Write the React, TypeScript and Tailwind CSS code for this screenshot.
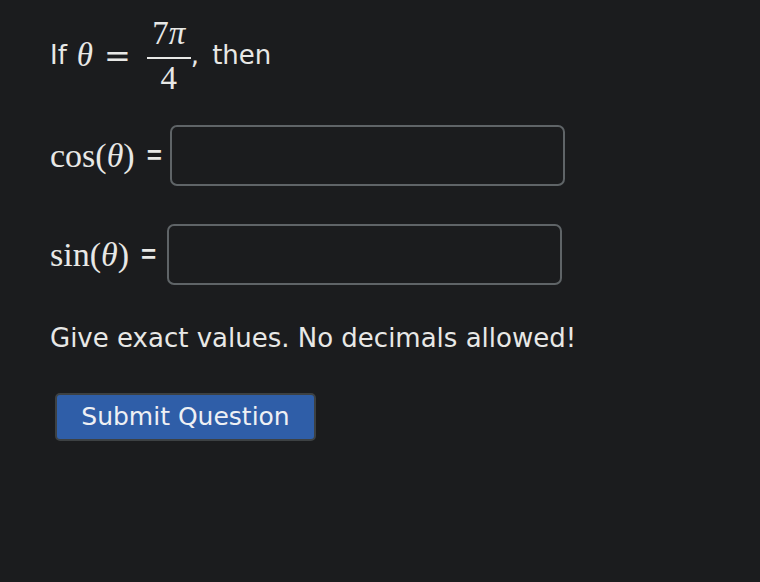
import React from "react";

const sans = { fontFamily: '"DejaVu Sans", sans-serif' };
const lsans = { fontFamily: '"Liberation Sans", Arial, sans-serif' };
const serif = { fontFamily: '"Liberation Serif", "Times New Roman", serif' };
const dserif = { fontFamily: '"DejaVu Serif", serif' };

export default function App() {
  return (
    <div
      className="min-h-[582px] w-full bg-[#1b1c1e] text-[#e8e8e6] pl-[50px] pt-[17px] text-[26px]"
      style={sans}
    >
      <div className="flex items-center">
        <span>If</span>
        <span className="ml-[10px] italic text-[33px] leading-none" style={serif}>θ</span>
        <span className="ml-[11px] text-[32px] leading-none" style={dserif}>=</span>
        <span className="ml-[16px] inline-flex flex-col items-center text-[33px]" style={serif}>
          <span className="leading-[32px] px-[2px]">
            7<span className="italic">π</span>
          </span>
          <span className="mt-[8px] h-[2px] w-[44px] bg-[#e8e8e6]" />
          <span className="mt-[3px] leading-[32px]">4</span>
        </span>
        <span>,</span>
        <span className="ml-[13px]">then</span>
      </div>

      <div className="mt-[31px] flex items-center">
        <span className="text-[34px] leading-none" style={serif}>
          cos(<span className="italic">θ</span>)
        </span>
        <span className="ml-[12px] font-bold" style={lsans}>=</span>
        <input
          className="ml-[8px] h-[61px] w-[395px] rounded-[7px] border-2 border-[#5f6467] bg-transparent outline-none"
          aria-label="cos"
        />
      </div>

      <div className="mt-[38px] flex items-center">
        <span className="text-[34px] leading-none" style={serif}>
          sin(<span className="italic">θ</span>)
        </span>
        <span className="ml-[12px] font-bold" style={lsans}>=</span>
        <input
          className="ml-[11px] h-[61px] w-[395px] rounded-[7px] border-2 border-[#5f6467] bg-transparent outline-none"
          aria-label="sin"
        />
      </div>

      <p className="mt-[37px] leading-[32px]">Give exact values. No decimals allowed!</p>

      <button
        className="ml-[5px] mt-[39px] flex h-[48px] w-[261px] items-center justify-center rounded-[5px] border-2 border-[#3d4143] bg-[#2f5ea8] text-[25px] text-[#eef0f4]"
        style={sans}
      >
        Submit Question
      </button>
    </div>
  );
}
